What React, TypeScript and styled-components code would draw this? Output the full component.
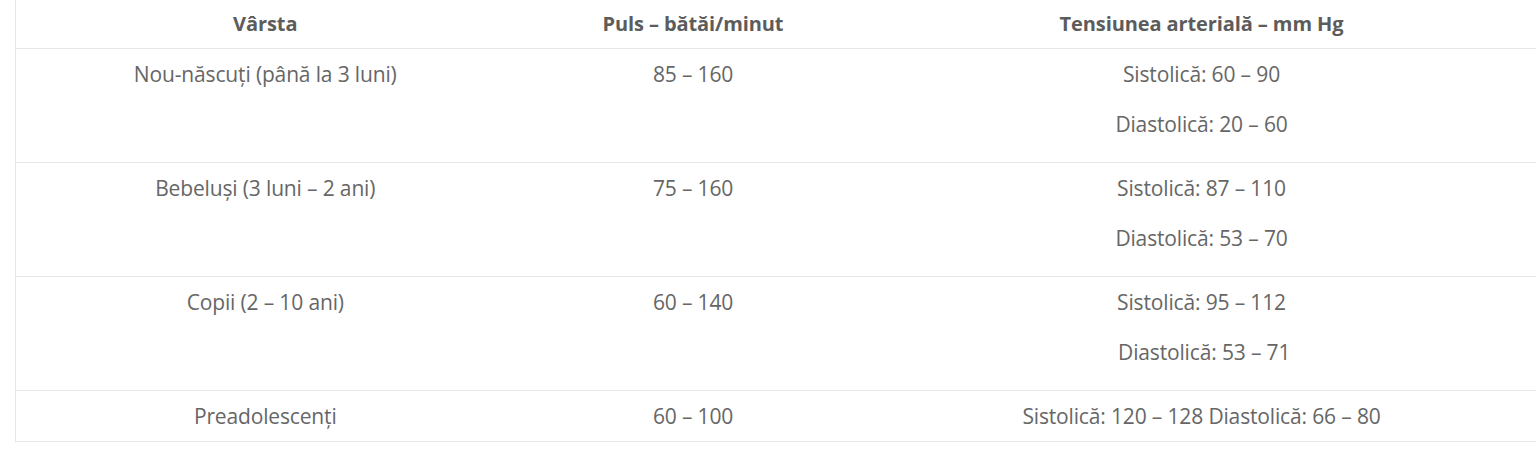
import React from "react";
import styled, { createGlobalStyle } from "styled-components";

const Global = createGlobalStyle`
  html, body { margin: 0; padding: 0; background: #fff; overflow: hidden; }
  body { font-family: "Open Sans", "Liberation Sans", sans-serif; }
`;

const Wrap = styled.div`
  width: 1536px;
  height: 455px;
  overflow: hidden;
  padding-left: 15px;
  box-sizing: border-box;
`;

const Table = styled.table`
  width: 1526px;
  table-layout: fixed;
  border-collapse: collapse;
  border-left: 1px solid #e6e6e6;
  border-bottom: 1px solid #e6e6e6;
  font-size: 21px;
  letter-spacing: -0.15px;
  color: #666;
`;

const Col = styled.col<{ $w: number }>`
  width: ${(p) => p.$w}px;
`;

const Th = styled.th<{ $pr?: number }>`
  font-size: 20px;
  letter-spacing: -0.1px;
  font-weight: 700;
  color: #5c5c5c;
  text-align: center;
  padding: 9px ${(p) => p.$pr ?? 0}px 9px 0;
  line-height: 30px;
  border-bottom: 1px solid #e6e6e6;
`;

const Tr = styled.tr`
  border-bottom: 1px solid #e6e6e6;
  &:last-child { border-bottom: none; }
`;

const Td = styled.td<{ $pr?: number }>`
  text-align: center;
  vertical-align: top;
  padding: 10px ${(p) => p.$pr ?? 0}px 10px 0;
  line-height: 30px;
`;

const P = styled.p`
  margin: 0 0 20px;
  line-height: 30px;
  &:last-child { margin-bottom: 13px; }
`;

const rows: { age: string; puls: string; t: string[] }[] = [
  { age: "Nou-născuți (până la 3 luni)", puls: "85 – 160", t: ["Sistolică: 60 – 90", "Diastolică: 20 – 60"] },
  { age: "Bebeluși (3 luni – 2 ani)", puls: "75 – 160", t: ["Sistolică: 87 – 110", "Diastolică: 53 – 70"] },
  { age: "Copii (2 – 10 ani)", puls: "60 – 140", t: ["Sistolică: 95 – 112", "\u00a0Diastolică: 53 – 71"] },
];

export default function App() {
  return (
    <Wrap>
      <Global />
      <Table>
        <colgroup>
          <Col $w={499} />
          <Col $w={357} />
          <Col $w={670} />
        </colgroup>
        <thead>
          <tr>
            <Th>Vârsta</Th>
            <Th>Puls – bătăi/minut</Th>
            <Th $pr={10}>Tensiunea arterială – mm Hg</Th>
          </tr>
        </thead>
        <tbody>
          {rows.map((r) => (
            <Tr key={r.age}>
              <Td>{r.age}</Td>
              <Td>{r.puls}</Td>
              <Td $pr={10}>
                {r.t.map((x) => (
                  <P key={x}>{x}</P>
                ))}
              </Td>
            </Tr>
          ))}
          <Tr>
            <Td>Preadolescenți</Td>
            <Td>60 – 100</Td>
            <Td $pr={10}>Sistolică: 120 – 128 Diastolică: 66 – 80</Td>
          </Tr>
        </tbody>
      </Table>
    </Wrap>
  );
}
